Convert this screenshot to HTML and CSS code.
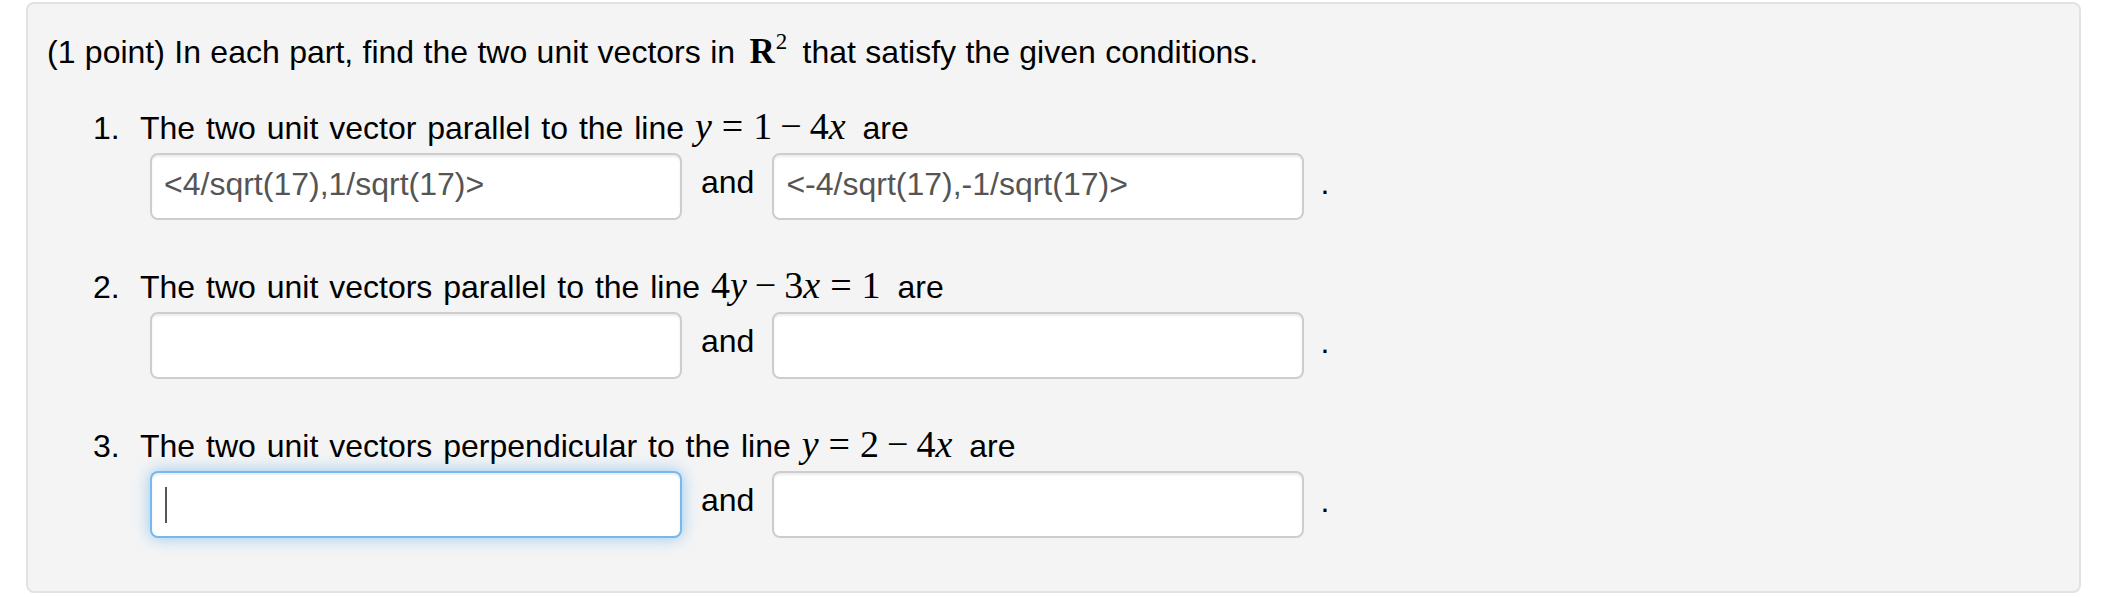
FILE: index.html
```html
<!DOCTYPE html>
<html>
<head>
<meta charset="utf-8">
<link rel="stylesheet" href="styles.css">
</head>
<body>
<div class="page">
  <div class="problem">
    <p class="intro">(1 point) In each part, find the two unit vectors in <span class="bold-r">R</span><sup class="sup">2</sup> that satisfy the given conditions.</p>
    <ol class="parts">
      <li class="part">
        <div class="stmt"><span class="num">1.</span><span class="txt">The two unit vector parallel to the line <span class="math"><i>y</i><span class="rel">=</span>1<span class="bin">−</span>4<i>x</i></span> are</span></div>
        <div class="answers">
          <input class="ans" type="text" value="&lt;4/sqrt(17),1/sqrt(17)&gt;">
          <span class="and">and</span>
          <input class="ans" type="text" value="&lt;-4/sqrt(17),-1/sqrt(17)&gt;">
          <span class="dot">.</span>
        </div>
      </li>
      <li class="part">
        <div class="stmt"><span class="num">2.</span><span class="txt">The two unit vectors parallel to the line <span class="math">4<i>y</i><span class="bin">−</span>3<i>x</i><span class="rel">=</span>1</span> are</span></div>
        <div class="answers">
          <input class="ans" type="text" value="">
          <span class="and">and</span>
          <input class="ans" type="text" value="">
          <span class="dot">.</span>
        </div>
      </li>
      <li class="part">
        <div class="stmt"><span class="num">3.</span><span class="txt">The two unit vectors perpendicular to the line <span class="math"><i>y</i><span class="rel">=</span>2<span class="bin">−</span>4<i>x</i></span> are</span></div>
        <div class="answers">
          <span class="field-wrap">
            <input class="ans focused" type="text" value="">
            <span class="caret"></span>
          </span>
          <span class="and">and</span>
          <input class="ans" type="text" value="">
          <span class="dot">.</span>
        </div>
      </li>
    </ol>
  </div>
</div>
</body>
</html>
```

FILE: styles.css
```css
html, body {
  margin: 0;
  padding: 0;
  background: #ffffff;
}

body {
  font-family: "Liberation Sans", Arial, Helvetica, sans-serif;
  font-size: 32px;
  line-height: 40px;
  color: #000;
}

.page {
  padding: 2px 0 0 26px;
}

.problem {
  width: 2055px;
  box-sizing: border-box;
  background: #f4f4f4;
  border: 2px solid #e2e2e2;
  border-radius: 8px;
  padding: 28px 19px 53px 19px;
}

.intro {
  margin: 0;
  height: 40px;
  white-space: nowrap;
  word-spacing: 0.5px;
}

.bold-r {
  font-family: "Liberation Serif", "DejaVu Serif", serif;
  font-weight: bold;
  font-size: 35px;
  line-height: 0;
  margin-left: 5px;
}

.sup {
  font-family: "Liberation Serif", "DejaVu Serif", serif;
  font-size: 23px;
  line-height: 0;
  vertical-align: 14px;
  margin-left: 1px;
  margin-right: 6px;
}

.parts {
  list-style: none;
  margin: 36px 0 0 46px;
  padding: 0;
}

.part + .part {
  margin-top: 47px;
}

.stmt {
  display: flex;
  height: 40px;
  white-space: nowrap;
}

.num {
  width: 47px;
  flex: none;
}

.txt {
  word-spacing: 2px;
}

.math {
  font-family: "Liberation Serif", "DejaVu Serif", serif;
  font-size: 38px;
  line-height: 0;
  word-spacing: 0;
  margin-right: 6px;
}

.math i {
  font-style: italic;
}

.rel {
  margin: 0 10px;
}

.bin {
  margin: 0 8px;
}

.answers {
  display: flex;
  align-items: flex-start;
  margin: 5px 0 0 57px;
  height: 67px;
}

.ans {
  width: 532px;
  height: 67px;
  box-sizing: border-box;
  border: 2px solid #cdcdcd;
  border-radius: 8px;
  background: #ffffff;
  padding: 6px 12px 11px 12px;
  margin: 0;
  font-family: "Liberation Sans", Arial, Helvetica, sans-serif;
  font-size: 32px;
  color: #555555;
  outline: none;
  box-shadow: inset 0 2px 2px rgba(0, 0, 0, 0.075);
}

.field-wrap {
  position: relative;
  display: block;
  width: 532px;
  height: 67px;
}

.ans.focused {
  border-color: rgba(82, 168, 236, 0.8);
  box-shadow: inset 0 2px 2px rgba(0, 0, 0, 0.075), 0 0 16px rgba(82, 168, 236, 0.6);
}

.caret {
  position: absolute;
  left: 15px;
  top: 16px;
  width: 2px;
  height: 36px;
  background: #555555;
}

.and {
  margin: 9px 18px 0 19px;
}

.dot {
  margin: 10px 0 0 16px;
}
```
